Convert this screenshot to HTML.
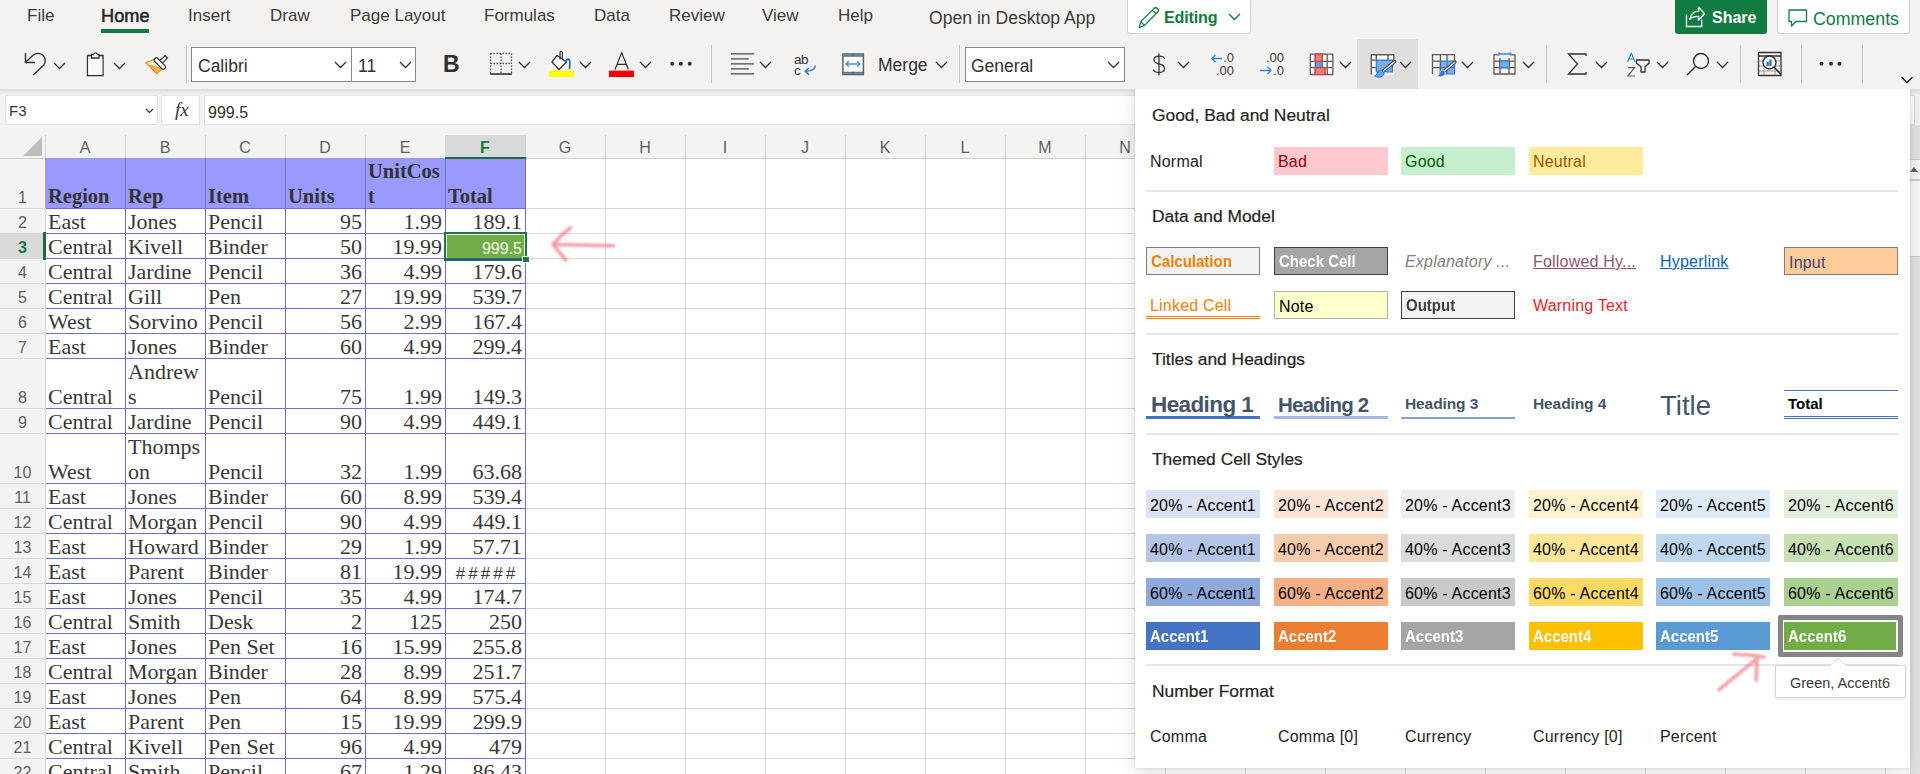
<!DOCTYPE html>
<html><head><meta charset="utf-8"><style>
*{margin:0;padding:0}
html,body{width:1920px;height:774px;overflow:hidden;background:#fff;font-family:"Liberation Sans",sans-serif;position:relative}
.tab{position:absolute;top:6px;font-size:17px;color:#3b3a39;white-space:nowrap}
.tab.sel{color:#252423;font-size:18.2px;-webkit-text-stroke:0.5px #252423;top:5.5px}
.box{position:absolute;background:#fff;border:1px solid #8a8886;box-sizing:border-box}
.rt{position:absolute;font-size:17.5px;color:#323130;white-space:nowrap}
.fb{position:absolute;background:#fff;border:1px solid #e1e1e1;box-sizing:border-box}
.ch{position:absolute;top:138.5px;width:80px;text-align:center;font-size:16px;color:#616161;line-height:18px}
.rh{position:absolute;left:0;width:45px;text-align:center;font-size:16px;color:#616161;line-height:25px}
.c{position:absolute;font-family:"Liberation Serif",serif;font-size:22px;color:#383838;line-height:25px;white-space:nowrap}
.c.b{font-weight:bold;font-size:20.5px;color:#333}
.ph{position:absolute;left:1152px;font-size:17.4px;color:#252423;white-space:nowrap;-webkit-text-stroke:0.2px #252423}
.sw{position:absolute;font-size:16px;letter-spacing:0.2px;color:#201f1e;white-space:nowrap;overflow:hidden;line-height:28px}
.sw span{position:absolute;left:4px;top:2px}
</style></head><body>
<div style="position:absolute;left:0;top:0;width:1920px;height:89px;background:#f3f2f1"></div>
<div class="tab" style="left:27px">File</div>
<div class="tab sel" style="left:101px">Home</div>
<div class="tab" style="left:188px">Insert</div>
<div class="tab" style="left:270px">Draw</div>
<div class="tab" style="left:350px">Page Layout</div>
<div class="tab" style="left:484px">Formulas</div>
<div class="tab" style="left:594px">Data</div>
<div class="tab" style="left:669px">Review</div>
<div class="tab" style="left:762px">View</div>
<div class="tab" style="left:838px">Help</div>
<div style="position:absolute;left:101px;top:29px;width:48px;height:4px;background:#107c41"></div>
<div class="tab" style="left:929px;top:7.5px;font-size:17.6px">Open in Desktop App</div>
<div style="position:absolute;left:1127px;top:-1px;width:124px;height:35px;background:#fff;border:1px solid #d2d0ce;border-radius:0 0 3px 3px;box-sizing:border-box"></div>
<svg style="position:absolute;left:1137px;top:6px" width="24" height="24" viewBox="0 0 24 24"><path d="M2.2 21.6 L3.8 15.6 L16.8 2.6 Q18.8 0.9 20.6 2.6 Q22.3 4.4 20.5 6.3 L7.5 19.4 Z M3.8 15.6 L7.5 19.4 M15.3 4.1 L19 7.8" fill="none" stroke="#107c41" stroke-width="1.3" stroke-linejoin="round"/></svg>
<div style="position:absolute;left:1164px;top:7.5px;font-size:16.2px;font-weight:bold;color:#107c41;letter-spacing:-0.2px">Editing</div>
<svg style="position:absolute;left:1228px;top:13px" width="13" height="8" viewBox="0 0 13 8"><path d="M1 1 L6.5 6.5 L12 1" fill="none" stroke="#107c41" stroke-width="1.4"/></svg>
<div style="position:absolute;left:1675px;top:0;width:92px;height:34px;background:#107c41;border-radius:0 0 3px 3px"></div>
<svg style="position:absolute;left:1684px;top:4px" width="24" height="26" viewBox="0 0 24 26"><path d="M2.5 10.5 V22.5 H17.7 V15.6" fill="none" stroke="#fff" stroke-width="1.3"/><path d="M5.8 15.2 Q7.5 7.5 14.5 7.2 V3.3 L20.6 9.8 L14.5 16.3 V12.3 Q8.5 12.2 5.8 15.2 Z" fill="none" stroke="#fff" stroke-width="1.3" stroke-linejoin="round"/></svg>
<div style="position:absolute;left:1712px;top:8.5px;font-size:16px;font-weight:bold;color:#fff">Share</div>
<div style="position:absolute;left:1777px;top:-1px;width:133px;height:35px;background:#fff;border:1px solid #d2d0ce;border-radius:0 0 3px 3px;box-sizing:border-box"></div>
<svg style="position:absolute;left:1788px;top:8.5px" width="20" height="19" viewBox="0 0 20 19"><path d="M1 1 H18.5 V12.5 H8 L3.5 17 V12.5 H1 Z" fill="none" stroke="#107c41" stroke-width="1.3" stroke-linejoin="round"/></svg>
<div style="position:absolute;left:1813px;top:8.5px;font-size:17.8px;color:#107c41">Comments</div>
<svg style="position:absolute;left:24px;top:52px" width="24" height="25" viewBox="0 0 24 25"><path d="M1.5 1 V10.5 H11" fill="none" stroke="#323130" stroke-width="1.4"/><path d="M1.9 10.1 L9 3.3 A7.3 7.3 0 0 1 19.6 13.3 L9.3 23" fill="none" stroke="#323130" stroke-width="1.4"/></svg>
<svg style="position:absolute;left:53px;top:62px" width="13" height="8" viewBox="0 0 13 8"><path d="M1 1 L6.5 6.5 L12 1" fill="none" stroke="#323130" stroke-width="1.3"/></svg>
<svg style="position:absolute;left:85px;top:52px" width="22" height="25" viewBox="0 0 22 25"><path d="M2.5 3.5 H6 M14 3.5 H18 V23.5 H2.5 V3.5" fill="none" stroke="#323130" stroke-width="1.4"/><path d="M6.5 6 V2.5 H8.5 Q9.5 0.8 10.5 0.8 Q11.5 0.8 12.5 2.5 H14 V6 Z" fill="#fff" stroke="#323130" stroke-width="1.3"/><rect x="3.2" y="7" width="14.2" height="15.8" fill="#faf9f8"/></svg>
<svg style="position:absolute;left:113px;top:62px" width="13" height="8" viewBox="0 0 13 8"><path d="M1 1 L6.5 6.5 L12 1" fill="none" stroke="#323130" stroke-width="1.3"/></svg>
<svg style="position:absolute;left:140px;top:48px" width="32" height="32" viewBox="0 0 32 32"><path d="M5.8 14.5 L15.3 11 L24 19.8 L16.5 25.6 Z" fill="#fde8c8" stroke="#e8891e" stroke-width="1.1" stroke-linejoin="round"/><path d="M10.3 17.4 L22.3 20.7 L16.5 25.6 Z" fill="#f7b955" stroke="#e8891e" stroke-width="0.9" stroke-linejoin="round"/><rect x="0" y="-1.7" width="10" height="3.4" transform="translate(19.2 15.8) rotate(-45)" fill="#fff" stroke="#323130" stroke-width="1.2"/><rect x="-7" y="-2.1" width="14" height="4.2" rx="1.6" transform="translate(19.8 15.6) rotate(45)" fill="#fff" stroke="#323130" stroke-width="1.2"/></svg>
<div style="position:absolute;left:186px;top:45px;width:1px;height:38px;background:#c8c6c4"></div>
<div class="box" style="left:191px;top:47px;width:161px;height:35px"></div>
<div class="box" style="left:351px;top:47px;width:65px;height:35px"></div>
<div class="rt" style="left:198px;top:55.5px">Calibri</div>
<svg style="position:absolute;left:334px;top:61px" width="13" height="8" viewBox="0 0 13 8"><path d="M1 1 L6.5 6.5 L12 1" fill="none" stroke="#323130" stroke-width="1.3"/></svg>
<div class="rt" style="left:358px;top:55.5px">11</div>
<svg style="position:absolute;left:399px;top:61px" width="13" height="8" viewBox="0 0 13 8"><path d="M1 1 L6.5 6.5 L12 1" fill="none" stroke="#323130" stroke-width="1.3"/></svg>
<div style="position:absolute;left:443px;top:51px;font-size:23px;font-weight:bold;color:#323130">B</div>
<svg style="position:absolute;left:489px;top:52px" width="24" height="24" viewBox="0 0 24 24"><path d="M1.5 1.5 H22.5 M1.5 11.5 H22.5 M1.5 1.5 V21 M12 1.5 V21 M22.5 1.5 V21" fill="none" stroke="#3b3a39" stroke-width="1.3" stroke-dasharray="1.3 1.7"/><path d="M1 22 H23" stroke="#323130" stroke-width="1.6"/></svg>
<svg style="position:absolute;left:518px;top:61px" width="13" height="8" viewBox="0 0 13 8"><path d="M1 1 L6.5 6.5 L12 1" fill="none" stroke="#323130" stroke-width="1.3"/></svg>
<svg style="position:absolute;left:548px;top:50px" width="28" height="28" viewBox="0 0 28 28"><path d="M9 5.5 L4 12 L11 19.5 L18.5 12 Z" fill="#fff" stroke="#323130" stroke-width="1.3" stroke-linejoin="round"/><path d="M12 9.5 V2.5 Q12 1.5 13.3 1.5 Q14 1.5 14.3 2.5 V9" fill="none" stroke="#323130" stroke-width="1.2"/><path d="M17 12 Q19 8.5 21 9.5 Q22.5 11 21.5 19" fill="none" stroke="#1f6fc5" stroke-width="1.8"/><rect x="0.75" y="20.6" width="25.25" height="6.4" fill="#ffff00"/></svg>
<svg style="position:absolute;left:579px;top:61px" width="13" height="8" viewBox="0 0 13 8"><path d="M1 1 L6.5 6.5 L12 1" fill="none" stroke="#323130" stroke-width="1.3"/></svg>
<svg style="position:absolute;left:607px;top:50px" width="28" height="28" viewBox="0 0 28 28"><path d="M8 19.5 L14.7 2.9 L21.4 19.5 M10.3 14.3 H19.1" fill="none" stroke="#323130" stroke-width="1.2"/><rect x="2" y="20.6" width="25" height="6.4" fill="#f00000"/></svg>
<svg style="position:absolute;left:639px;top:61px" width="13" height="8" viewBox="0 0 13 8"><path d="M1 1 L6.5 6.5 L12 1" fill="none" stroke="#323130" stroke-width="1.3"/></svg>
<svg style="position:absolute;left:668px;top:61px" width="26" height="6" viewBox="0 0 26 6"><circle cx="4.2" cy="2.8" r="2" fill="#323130"/><circle cx="12.8" cy="2.8" r="2" fill="#323130"/><circle cx="21.7" cy="2.8" r="2" fill="#323130"/></svg>
<div style="position:absolute;left:711px;top:45px;width:1px;height:38px;background:#c8c6c4"></div>
<svg style="position:absolute;left:730px;top:52px" width="26" height="24" viewBox="0 0 26 24"><path d="M1 1.9 H24 M1 6.9 H18.8 M1 11.9 H24 M1 16.9 H18.8 M1 21.9 H24" fill="none" stroke="#4a4a4a" stroke-width="1.4"/></svg>
<svg style="position:absolute;left:759px;top:61px" width="13" height="8" viewBox="0 0 13 8"><path d="M1 1 L6.5 6.5 L12 1" fill="none" stroke="#323130" stroke-width="1.3"/></svg>
<div style="position:absolute;left:794px;top:54px;font-size:13.5px;color:#323130;line-height:11px;width:30px;letter-spacing:-0.5px">ab<br>c</div>
<svg style="position:absolute;left:802px;top:62px" width="16" height="14" viewBox="0 0 16 14"><path d="M13.5 3.5 Q13 9 3.5 9.3 M7 6 L3.3 9.3 L7 12.8" fill="none" stroke="#1f6fc5" stroke-width="1.3"/></svg>
<svg style="position:absolute;left:840px;top:52px" width="26" height="24" viewBox="0 0 26 24"><rect x="2.5" y="4" width="21" height="15.5" fill="#fff"/><rect x="2.9" y="2" width="20.5" height="20.5" fill="none" stroke="#5f5f5f" stroke-width="1.5"/><path d="M2.5 3.3 H23.5 M2.5 21.2 H23.5" stroke="#4a90d6" stroke-width="1.6"/><path d="M13 1.5 V3.5 M13 19.5 V22" stroke="#5f5f5f" stroke-width="1.2"/><path d="M6 12 H20 M8.8 9.2 L6 12 L8.8 14.8 M17.2 9.2 L20 12 L17.2 14.8" fill="none" stroke="#4a90d6" stroke-width="1.4"/><path d="M2.5 4.2 H23.5" stroke="#5f5f5f" stroke-width="1"/><path d="M2.5 20.3 H23.5" stroke="#5f5f5f" stroke-width="1"/></svg>
<div class="rt" style="left:878px;top:55px">Merge</div>
<svg style="position:absolute;left:935px;top:61px" width="13" height="8" viewBox="0 0 13 8"><path d="M1 1 L6.5 6.5 L12 1" fill="none" stroke="#323130" stroke-width="1.3"/></svg>
<div style="position:absolute;left:959px;top:45px;width:1px;height:38px;background:#c8c6c4"></div>
<div class="box" style="left:965px;top:47px;width:160px;height:35px"></div>
<div class="rt" style="left:971px;top:55.5px">General</div>
<svg style="position:absolute;left:1107px;top:61px" width="13" height="8" viewBox="0 0 13 8"><path d="M1 1 L6.5 6.5 L12 1" fill="none" stroke="#323130" stroke-width="1.3"/></svg>
<svg style="position:absolute;left:1150px;top:52px" width="18" height="25" viewBox="0 0 18 25"><path d="M9 1.5 V23.5" stroke="#3b3a39" stroke-width="1.3"/><path d="M14.5 7 Q14 4.2 9 4.2 Q4 4.2 4 7.8 Q4 11 9 12 Q14.5 13 14.5 16.5 Q14.5 20.5 9 20.5 Q4 20.5 3.5 17.5" fill="none" stroke="#3b3a39" stroke-width="1.3"/></svg>
<svg style="position:absolute;left:1177px;top:61px" width="13" height="8" viewBox="0 0 13 8"><path d="M1 1 L6.5 6.5 L12 1" fill="none" stroke="#323130" stroke-width="1.3"/></svg>
<div style="position:absolute;left:1208px;top:52px;font-size:13px;color:#3b3a39;line-height:12.5px;text-align:right;width:26px">.0<br>.00</div>
<svg style="position:absolute;left:1210px;top:54px" width="14" height="10" viewBox="0 0 14 10"><path d="M12 4.5 H2 M5.5 1 L2 4.5 L5.5 8" fill="none" stroke="#2b88d8" stroke-width="1.3"/></svg>
<div style="position:absolute;left:1258px;top:52px;font-size:13px;color:#3b3a39;line-height:12.5px;text-align:right;width:26px">.00<br>.0</div>
<svg style="position:absolute;left:1259px;top:66px" width="14" height="10" viewBox="0 0 14 10"><path d="M1 4.5 H12 M8.5 1 L12 4.5 L8.5 8" fill="none" stroke="#2b88d8" stroke-width="1.3"/></svg>
<svg style="position:absolute;left:1309px;top:53px" width="26" height="24" viewBox="0 0 26 24"><rect x="1.3" y="1.2" width="22.5" height="20.3" fill="#fff"/><rect x="6.3" y="1.2" width="6.9" height="7.2" fill="#f47c7c" stroke="#d9393e" stroke-width="1"/><rect x="6.8" y="8.6" width="5.9" height="5.8" fill="#5aa0e6"/><rect x="6.3" y="14.6" width="9.7" height="6.9" fill="#f47c7c" stroke="#d9393e" stroke-width="1"/><path d="M1.3 1.2 H23.8 V21.5 H1.3 Z M1.3 8.4 H23.8 M1.3 14.6 H23.8 M6.3 1.2 V21.5 M13.2 1.2 V21.5 M18.2 1.2 V21.5" fill="none" stroke="#605e5c" stroke-width="1.3"/><rect x="6.3" y="1.2" width="6.9" height="7.2" fill="#f47c7c" stroke="#d9393e" stroke-width="1.1"/><rect x="6.3" y="14.6" width="9.7" height="6.9" fill="#f47c7c" stroke="#d9393e" stroke-width="1.1"/></svg>
<svg style="position:absolute;left:1339px;top:61px" width="13" height="8" viewBox="0 0 13 8"><path d="M1 1 L6.5 6.5 L12 1" fill="none" stroke="#323130" stroke-width="1.3"/></svg>
<div style="position:absolute;left:1357px;top:39px;width:61px;height:50px;background:#e1dfdd"></div>
<svg style="position:absolute;left:1370px;top:53px" width="27" height="26" viewBox="0 0 27 26"><rect x="1.3" y="1.8" width="22.4" height="19.7" fill="#fff"/><path d="M6.3 7.1 H22.5 V19 H6.3 Z" fill="#74b0ef" stroke="#2b78c8" stroke-width="1.2"/><path d="M1.3 21.5 V1.8 H23.7 V8.4 M1.3 7.1 H6.3 M1.3 14.6 H6.3 M6.3 1.8 V7.1 M18 1.8 V7.1" fill="none" stroke="#605e5c" stroke-width="1.4"/><path d="M24.5 8.8 L12 19" stroke="#3b3a39" stroke-width="3.4" stroke-linecap="round"/><path d="M24.5 8.8 L12 19" stroke="#fff" stroke-width="1.4" stroke-linecap="round"/><path d="M11.5 17 Q8 16.5 7.2 20 Q6.6 22.6 4.5 23.2 Q12 26 14.3 20.5 Z" fill="#5ca8ef" stroke="#2b78c8" stroke-width="1"/></svg>
<svg style="position:absolute;left:1399px;top:61px" width="13" height="8" viewBox="0 0 13 8"><path d="M1 1 L6.5 6.5 L12 1" fill="none" stroke="#323130" stroke-width="1.3"/></svg>
<svg style="position:absolute;left:1431px;top:53px" width="26" height="26" viewBox="0 0 26 26"><path d="M9.4 8.2 H23.5 V21 H9.4 Z" fill="#74b0ef" stroke="#2b78c8" stroke-width="1.2"/><path d="M1.5 21 V1.7 H23.5 V8.2 M1.5 8.2 H9.4 M1.5 14.7 H9.4 M9.4 1.7 V21 M16 1.7 V8.2" fill="none" stroke="#605e5c" stroke-width="1.3"/><path d="M9.4 14.7 H23.5 M16 8.2 V21" stroke="#2b78c8" stroke-width="1"/><path d="M24 9 L13.5 18" stroke="#3b3a39" stroke-width="3.2" stroke-linecap="round"/><path d="M24 9 L13.5 18" stroke="#fff" stroke-width="1.3"/><path d="M13 17 Q9.5 16.5 8.5 20 Q8 22.5 5.5 23 Q12.5 25.5 14.5 20 Z" fill="#2b7cd3" stroke="#fff" stroke-width="0.6"/></svg>
<svg style="position:absolute;left:1461px;top:61px" width="13" height="8" viewBox="0 0 13 8"><path d="M1 1 L6.5 6.5 L12 1" fill="none" stroke="#323130" stroke-width="1.3"/></svg>
<svg style="position:absolute;left:1492px;top:51px" width="26" height="26" viewBox="0 0 26 26"><rect x="8" y="10.2" width="9" height="6.5" fill="#74b0ef" stroke="#2b78c8" stroke-width="1"/><path d="M6.5 3.8 H2 V23 H23 V3.8 H18.5 M2 10.2 H23 M2 16.7 H23 M8 7 V23 M17 7 V23" fill="none" stroke="#605e5c" stroke-width="1.3"/><path d="M7 3 H18.3 M7 1.3 V4.5 M18.3 1.3 V4.5" stroke="#2b88d8" stroke-width="1.3"/><rect x="8" y="10.2" width="9" height="6.5" fill="#74b0ef" stroke="#2b78c8" stroke-width="1"/></svg>
<svg style="position:absolute;left:1522px;top:61px" width="13" height="8" viewBox="0 0 13 8"><path d="M1 1 L6.5 6.5 L12 1" fill="none" stroke="#323130" stroke-width="1.3"/></svg>
<div style="position:absolute;left:1546px;top:45px;width:1px;height:38px;background:#c8c6c4"></div>
<svg style="position:absolute;left:1567px;top:53px" width="22" height="22" viewBox="0 0 22 22"><path d="M19 3 V1 H1.5 L10.5 11 L1.5 21 H19 V19" fill="none" stroke="#323130" stroke-width="1.3"/></svg>
<svg style="position:absolute;left:1595px;top:61px" width="13" height="8" viewBox="0 0 13 8"><path d="M1 1 L6.5 6.5 L12 1" fill="none" stroke="#323130" stroke-width="1.3"/></svg>
<svg style="position:absolute;left:1625px;top:50px" width="28" height="28" viewBox="0 0 28 28"><path d="M2.5 12 L6.3 3.2 L10.1 12 M3.8 9 H8.8" fill="none" stroke="#2b88d8" stroke-width="1.2"/><path d="M2.8 17.6 H9.6 L2.8 26 H10" fill="none" stroke="#5f5f5f" stroke-width="1.2"/><path d="M11.5 10 H24 V13.3 L20 16.8 V22 H16 V16.8 L11.5 13.3 Z" fill="none" stroke="#323130" stroke-width="1.3" stroke-linejoin="round"/></svg>
<svg style="position:absolute;left:1656px;top:61px" width="13" height="8" viewBox="0 0 13 8"><path d="M1 1 L6.5 6.5 L12 1" fill="none" stroke="#323130" stroke-width="1.3"/></svg>
<svg style="position:absolute;left:1686px;top:52px" width="24" height="24" viewBox="0 0 24 24"><circle cx="15" cy="9" r="7.5" fill="none" stroke="#323130" stroke-width="1.4"/><path d="M9.5 14.5 L1 23" stroke="#323130" stroke-width="1.4"/></svg>
<svg style="position:absolute;left:1716px;top:61px" width="13" height="8" viewBox="0 0 13 8"><path d="M1 1 L6.5 6.5 L12 1" fill="none" stroke="#323130" stroke-width="1.3"/></svg>
<div style="position:absolute;left:1740px;top:45px;width:1px;height:38px;background:#c8c6c4"></div>
<svg style="position:absolute;left:1757px;top:51px" width="27" height="27" viewBox="0 0 27 27"><path d="M1.5 1.5 H24 V24.5 H1.5 Z M1.5 5 H24" fill="none" stroke="#323130" stroke-width="1.3"/><path d="M1.5 10 H24 M1.5 15 H24 M1.5 20 H24 M7 5 V24 M18 5 V24" stroke="#8a8886" stroke-width="0.8"/><circle cx="12.5" cy="11.5" r="6.5" fill="#fff" stroke="#323130" stroke-width="1.4"/><path d="M17 16 L24 23.5" stroke="#323130" stroke-width="1.6"/><rect x="9.5" y="11" width="2.3" height="4" fill="#1f6fc5"/><rect x="12.3" y="8.5" width="2.3" height="6.5" fill="#1f6fc5"/></svg>
<div style="position:absolute;left:1801px;top:45px;width:1px;height:38px;background:#c8c6c4"></div>
<svg style="position:absolute;left:1819px;top:61px" width="26" height="6" viewBox="0 0 26 6"><circle cx="2.5" cy="2.8" r="2" fill="#323130"/><circle cx="12" cy="2.8" r="2" fill="#323130"/><circle cx="20.5" cy="2.8" r="2" fill="#323130"/></svg>
<div style="position:absolute;left:1862px;top:45px;width:1px;height:38px;background:#c8c6c4"></div>
<svg style="position:absolute;left:1900px;top:76px" width="14" height="8" viewBox="0 0 13 8"><path d="M1 1 L6.5 6.5 L12 1" fill="none" stroke="#201f1e" stroke-width="1.3"/></svg>
<div style="position:absolute;left:0;top:89px;width:1920px;height:45px;background:#f3f3f3"></div>
<div style="position:absolute;left:0;top:89px;width:1920px;height:6px;background:linear-gradient(#dcdcdc,#f3f3f3)"></div>
<div class="fb" style="left:5px;top:95px;width:153px;height:30px"></div>
<div style="position:absolute;left:9px;top:102px;font-size:15px;color:#323130">F3</div>
<svg style="position:absolute;left:145px;top:107.5px" width="9" height="6" viewBox="0 0 9 6"><path d="M1 1 L4.5 4.5 L8 1" fill="none" stroke="#323130" stroke-width="1.2"/></svg>
<div class="fb" style="left:161px;top:95px;width:39px;height:30px"></div>
<div style="position:absolute;left:175px;top:99px;font-family:'Liberation Serif',serif;font-style:italic;font-size:19px;color:#323130">fx</div>
<div class="fb" style="left:204px;top:95px;width:1711px;height:30px"></div>
<div style="position:absolute;left:208px;top:103.5px;font-size:16px;color:#323130">999.5</div>
<div style="position:absolute;left:0;top:134px;width:1920px;height:24px;background:#f3f3f3"></div>
<div style="position:absolute;left:0;top:158px;width:45px;height:620px;background:#f3f3f3"></div>
<svg style="position:absolute;left:23px;top:137px" width="20" height="20" viewBox="0 0 20 20"><path d="M19 0 V19 H0 Z" fill="#bdbdbd"/></svg>
<div style="position:absolute;left:445px;top:135px;width:81px;height:23px;background:#d9d9d9"></div>
<div style="position:absolute;left:45px;top:135px;width:1px;height:23px;background:#d4d4d4"></div>
<div style="position:absolute;left:45px;top:158px;width:1px;height:620px;background:#d9d9d9"></div>
<div style="position:absolute;left:125px;top:135px;width:1px;height:23px;background:#d4d4d4"></div>
<div style="position:absolute;left:125px;top:158px;width:1px;height:620px;background:#d9d9d9"></div>
<div style="position:absolute;left:205px;top:135px;width:1px;height:23px;background:#d4d4d4"></div>
<div style="position:absolute;left:205px;top:158px;width:1px;height:620px;background:#d9d9d9"></div>
<div style="position:absolute;left:285px;top:135px;width:1px;height:23px;background:#d4d4d4"></div>
<div style="position:absolute;left:285px;top:158px;width:1px;height:620px;background:#d9d9d9"></div>
<div style="position:absolute;left:365px;top:135px;width:1px;height:23px;background:#d4d4d4"></div>
<div style="position:absolute;left:365px;top:158px;width:1px;height:620px;background:#d9d9d9"></div>
<div style="position:absolute;left:445px;top:135px;width:1px;height:23px;background:#d4d4d4"></div>
<div style="position:absolute;left:445px;top:158px;width:1px;height:620px;background:#d9d9d9"></div>
<div style="position:absolute;left:525px;top:135px;width:1px;height:23px;background:#d4d4d4"></div>
<div style="position:absolute;left:525px;top:158px;width:1px;height:620px;background:#d9d9d9"></div>
<div style="position:absolute;left:605px;top:135px;width:1px;height:23px;background:#d4d4d4"></div>
<div style="position:absolute;left:605px;top:158px;width:1px;height:620px;background:#d9d9d9"></div>
<div style="position:absolute;left:685px;top:135px;width:1px;height:23px;background:#d4d4d4"></div>
<div style="position:absolute;left:685px;top:158px;width:1px;height:620px;background:#d9d9d9"></div>
<div style="position:absolute;left:765px;top:135px;width:1px;height:23px;background:#d4d4d4"></div>
<div style="position:absolute;left:765px;top:158px;width:1px;height:620px;background:#d9d9d9"></div>
<div style="position:absolute;left:845px;top:135px;width:1px;height:23px;background:#d4d4d4"></div>
<div style="position:absolute;left:845px;top:158px;width:1px;height:620px;background:#d9d9d9"></div>
<div style="position:absolute;left:925px;top:135px;width:1px;height:23px;background:#d4d4d4"></div>
<div style="position:absolute;left:925px;top:158px;width:1px;height:620px;background:#d9d9d9"></div>
<div style="position:absolute;left:1005px;top:135px;width:1px;height:23px;background:#d4d4d4"></div>
<div style="position:absolute;left:1005px;top:158px;width:1px;height:620px;background:#d9d9d9"></div>
<div style="position:absolute;left:1085px;top:135px;width:1px;height:23px;background:#d4d4d4"></div>
<div style="position:absolute;left:1085px;top:158px;width:1px;height:620px;background:#d9d9d9"></div>
<div style="position:absolute;left:1165px;top:135px;width:1px;height:23px;background:#d4d4d4"></div>
<div style="position:absolute;left:1165px;top:158px;width:1px;height:620px;background:#d9d9d9"></div>
<div style="position:absolute;left:1245px;top:135px;width:1px;height:23px;background:#d4d4d4"></div>
<div style="position:absolute;left:1245px;top:158px;width:1px;height:620px;background:#d9d9d9"></div>
<div style="position:absolute;left:1325px;top:135px;width:1px;height:23px;background:#d4d4d4"></div>
<div style="position:absolute;left:1325px;top:158px;width:1px;height:620px;background:#d9d9d9"></div>
<div style="position:absolute;left:1405px;top:135px;width:1px;height:23px;background:#d4d4d4"></div>
<div style="position:absolute;left:1405px;top:158px;width:1px;height:620px;background:#d9d9d9"></div>
<div style="position:absolute;left:1485px;top:135px;width:1px;height:23px;background:#d4d4d4"></div>
<div style="position:absolute;left:1485px;top:158px;width:1px;height:620px;background:#d9d9d9"></div>
<div style="position:absolute;left:1565px;top:135px;width:1px;height:23px;background:#d4d4d4"></div>
<div style="position:absolute;left:1565px;top:158px;width:1px;height:620px;background:#d9d9d9"></div>
<div style="position:absolute;left:1645px;top:135px;width:1px;height:23px;background:#d4d4d4"></div>
<div style="position:absolute;left:1645px;top:158px;width:1px;height:620px;background:#d9d9d9"></div>
<div style="position:absolute;left:1725px;top:135px;width:1px;height:23px;background:#d4d4d4"></div>
<div style="position:absolute;left:1725px;top:158px;width:1px;height:620px;background:#d9d9d9"></div>
<div style="position:absolute;left:1805px;top:135px;width:1px;height:23px;background:#d4d4d4"></div>
<div style="position:absolute;left:1805px;top:158px;width:1px;height:620px;background:#d9d9d9"></div>
<div style="position:absolute;left:1885px;top:135px;width:1px;height:23px;background:#d4d4d4"></div>
<div style="position:absolute;left:1885px;top:158px;width:1px;height:620px;background:#d9d9d9"></div>
<div style="position:absolute;left:1965px;top:135px;width:1px;height:23px;background:#d4d4d4"></div>
<div style="position:absolute;left:1965px;top:158px;width:1px;height:620px;background:#d9d9d9"></div>
<div style="position:absolute;left:0;top:208px;width:1920px;height:1px;background:#d9d9d9"></div>
<div style="position:absolute;left:0;top:233px;width:1920px;height:1px;background:#d9d9d9"></div>
<div style="position:absolute;left:0;top:258px;width:1920px;height:1px;background:#d9d9d9"></div>
<div style="position:absolute;left:0;top:283px;width:1920px;height:1px;background:#d9d9d9"></div>
<div style="position:absolute;left:0;top:308px;width:1920px;height:1px;background:#d9d9d9"></div>
<div style="position:absolute;left:0;top:333px;width:1920px;height:1px;background:#d9d9d9"></div>
<div style="position:absolute;left:0;top:358px;width:1920px;height:1px;background:#d9d9d9"></div>
<div style="position:absolute;left:0;top:408px;width:1920px;height:1px;background:#d9d9d9"></div>
<div style="position:absolute;left:0;top:433px;width:1920px;height:1px;background:#d9d9d9"></div>
<div style="position:absolute;left:0;top:483px;width:1920px;height:1px;background:#d9d9d9"></div>
<div style="position:absolute;left:0;top:508px;width:1920px;height:1px;background:#d9d9d9"></div>
<div style="position:absolute;left:0;top:533px;width:1920px;height:1px;background:#d9d9d9"></div>
<div style="position:absolute;left:0;top:558px;width:1920px;height:1px;background:#d9d9d9"></div>
<div style="position:absolute;left:0;top:583px;width:1920px;height:1px;background:#d9d9d9"></div>
<div style="position:absolute;left:0;top:608px;width:1920px;height:1px;background:#d9d9d9"></div>
<div style="position:absolute;left:0;top:633px;width:1920px;height:1px;background:#d9d9d9"></div>
<div style="position:absolute;left:0;top:658px;width:1920px;height:1px;background:#d9d9d9"></div>
<div style="position:absolute;left:0;top:683px;width:1920px;height:1px;background:#d9d9d9"></div>
<div style="position:absolute;left:0;top:708px;width:1920px;height:1px;background:#d9d9d9"></div>
<div style="position:absolute;left:0;top:733px;width:1920px;height:1px;background:#d9d9d9"></div>
<div style="position:absolute;left:0;top:758px;width:1920px;height:1px;background:#d9d9d9"></div>
<div style="position:absolute;left:0;top:783px;width:1920px;height:1px;background:#d9d9d9"></div>
<div style="position:absolute;left:0;top:158px;width:1920px;height:1px;background:#cfcfcf"></div>
<div class="ch" style="left:45px">A</div>
<div class="ch" style="left:125px">B</div>
<div class="ch" style="left:205px">C</div>
<div class="ch" style="left:285px">D</div>
<div class="ch" style="left:365px">E</div>
<div class="ch" style="left:445px;color:#107c41;font-weight:bold">F</div>
<div class="ch" style="left:525px">G</div>
<div class="ch" style="left:605px">H</div>
<div class="ch" style="left:685px">I</div>
<div class="ch" style="left:765px">J</div>
<div class="ch" style="left:845px">K</div>
<div class="ch" style="left:925px">L</div>
<div class="ch" style="left:1005px">M</div>
<div class="ch" style="left:1085px">N</div>
<div class="ch" style="left:1165px">O</div>
<div class="ch" style="left:1245px">P</div>
<div class="ch" style="left:1325px">Q</div>
<div class="ch" style="left:1405px">R</div>
<div class="ch" style="left:1485px">S</div>
<div class="ch" style="left:1565px">T</div>
<div class="ch" style="left:1645px">U</div>
<div class="ch" style="left:1725px">V</div>
<div class="ch" style="left:1805px">W</div>
<div class="ch" style="left:1885px">X</div>
<div style="position:absolute;left:0;top:233px;width:45px;height:25px;background:#d9d9d9"></div>
<div class="rh" style="top:185px;">1</div>
<div class="rh" style="top:210px;">2</div>
<div class="rh" style="top:235px;color:#107c41;font-weight:bold;">3</div>
<div class="rh" style="top:260px;">4</div>
<div class="rh" style="top:285px;">5</div>
<div class="rh" style="top:310px;">6</div>
<div class="rh" style="top:335px;">7</div>
<div class="rh" style="top:385px;">8</div>
<div class="rh" style="top:410px;">9</div>
<div class="rh" style="top:460px;">10</div>
<div class="rh" style="top:485px;">11</div>
<div class="rh" style="top:510px;">12</div>
<div class="rh" style="top:535px;">13</div>
<div class="rh" style="top:560px;">14</div>
<div class="rh" style="top:585px;">15</div>
<div class="rh" style="top:610px;">16</div>
<div class="rh" style="top:635px;">17</div>
<div class="rh" style="top:660px;">18</div>
<div class="rh" style="top:685px;">19</div>
<div class="rh" style="top:710px;">20</div>
<div class="rh" style="top:735px;">21</div>
<div class="rh" style="top:760px;">22</div>
<div style="position:absolute;left:45px;top:158px;width:481px;height:50px;background:#9999ff"></div>
<div style="position:absolute;left:125px;top:158px;width:1px;height:620px;background:#6f6fd9"></div>
<div style="position:absolute;left:205px;top:158px;width:1px;height:620px;background:#6f6fd9"></div>
<div style="position:absolute;left:285px;top:158px;width:1px;height:620px;background:#6f6fd9"></div>
<div style="position:absolute;left:365px;top:158px;width:1px;height:620px;background:#6f6fd9"></div>
<div style="position:absolute;left:445px;top:158px;width:1px;height:620px;background:#6f6fd9"></div>
<div style="position:absolute;left:525px;top:158px;width:1px;height:620px;background:#6f6fd9"></div>
<div style="position:absolute;left:46px;top:208px;width:480px;height:1px;background:#6f6fd9"></div>
<div style="position:absolute;left:46px;top:233px;width:480px;height:1px;background:#6f6fd9"></div>
<div style="position:absolute;left:46px;top:258px;width:480px;height:1px;background:#6f6fd9"></div>
<div style="position:absolute;left:46px;top:283px;width:480px;height:1px;background:#6f6fd9"></div>
<div style="position:absolute;left:46px;top:308px;width:480px;height:1px;background:#6f6fd9"></div>
<div style="position:absolute;left:46px;top:333px;width:480px;height:1px;background:#6f6fd9"></div>
<div style="position:absolute;left:46px;top:358px;width:480px;height:1px;background:#6f6fd9"></div>
<div style="position:absolute;left:46px;top:408px;width:480px;height:1px;background:#6f6fd9"></div>
<div style="position:absolute;left:46px;top:433px;width:480px;height:1px;background:#6f6fd9"></div>
<div style="position:absolute;left:46px;top:483px;width:480px;height:1px;background:#6f6fd9"></div>
<div style="position:absolute;left:46px;top:508px;width:480px;height:1px;background:#6f6fd9"></div>
<div style="position:absolute;left:46px;top:533px;width:480px;height:1px;background:#6f6fd9"></div>
<div style="position:absolute;left:46px;top:558px;width:480px;height:1px;background:#6f6fd9"></div>
<div style="position:absolute;left:46px;top:583px;width:480px;height:1px;background:#6f6fd9"></div>
<div style="position:absolute;left:46px;top:608px;width:480px;height:1px;background:#6f6fd9"></div>
<div style="position:absolute;left:46px;top:633px;width:480px;height:1px;background:#6f6fd9"></div>
<div style="position:absolute;left:46px;top:658px;width:480px;height:1px;background:#6f6fd9"></div>
<div style="position:absolute;left:46px;top:683px;width:480px;height:1px;background:#6f6fd9"></div>
<div style="position:absolute;left:46px;top:708px;width:480px;height:1px;background:#6f6fd9"></div>
<div style="position:absolute;left:46px;top:733px;width:480px;height:1px;background:#6f6fd9"></div>
<div style="position:absolute;left:46px;top:758px;width:480px;height:1px;background:#6f6fd9"></div>
<div style="position:absolute;left:46px;top:783px;width:480px;height:1px;background:#6f6fd9"></div>
<div class="c b" style="left:48px;top:184px">Region</div>
<div class="c b" style="left:128px;top:184px">Rep</div>
<div class="c b" style="left:208px;top:184px">Item</div>
<div class="c b" style="left:288px;top:184px">Units</div>
<div class="c b" style="left:368px;top:184px">t</div>
<div class="c b" style="left:368px;top:159px">UnitCos</div>
<div class="c b" style="left:448px;top:184px">Total</div>
<div class="c" style="left:48px;top:209px">East</div>
<div class="c" style="left:128px;top:209px">Jones</div>
<div class="c" style="left:208px;top:209px">Pencil</div>
<div class="c" style="left:285px;top:209px;width:77px;text-align:right">95</div>
<div class="c" style="left:365px;top:209px;width:77px;text-align:right">1.99</div>
<div class="c" style="left:445px;top:209px;width:77px;text-align:right">189.1</div>
<div class="c" style="left:48px;top:234px">Central</div>
<div class="c" style="left:128px;top:234px">Kivell</div>
<div class="c" style="left:208px;top:234px">Binder</div>
<div class="c" style="left:285px;top:234px;width:77px;text-align:right">50</div>
<div class="c" style="left:365px;top:234px;width:77px;text-align:right">19.99</div>
<div class="c" style="left:48px;top:259px">Central</div>
<div class="c" style="left:128px;top:259px">Jardine</div>
<div class="c" style="left:208px;top:259px">Pencil</div>
<div class="c" style="left:285px;top:259px;width:77px;text-align:right">36</div>
<div class="c" style="left:365px;top:259px;width:77px;text-align:right">4.99</div>
<div class="c" style="left:445px;top:259px;width:77px;text-align:right">179.6</div>
<div class="c" style="left:48px;top:284px">Central</div>
<div class="c" style="left:128px;top:284px">Gill</div>
<div class="c" style="left:208px;top:284px">Pen</div>
<div class="c" style="left:285px;top:284px;width:77px;text-align:right">27</div>
<div class="c" style="left:365px;top:284px;width:77px;text-align:right">19.99</div>
<div class="c" style="left:445px;top:284px;width:77px;text-align:right">539.7</div>
<div class="c" style="left:48px;top:309px">West</div>
<div class="c" style="left:128px;top:309px">Sorvino</div>
<div class="c" style="left:208px;top:309px">Pencil</div>
<div class="c" style="left:285px;top:309px;width:77px;text-align:right">56</div>
<div class="c" style="left:365px;top:309px;width:77px;text-align:right">2.99</div>
<div class="c" style="left:445px;top:309px;width:77px;text-align:right">167.4</div>
<div class="c" style="left:48px;top:334px">East</div>
<div class="c" style="left:128px;top:334px">Jones</div>
<div class="c" style="left:208px;top:334px">Binder</div>
<div class="c" style="left:285px;top:334px;width:77px;text-align:right">60</div>
<div class="c" style="left:365px;top:334px;width:77px;text-align:right">4.99</div>
<div class="c" style="left:445px;top:334px;width:77px;text-align:right">299.4</div>
<div class="c" style="left:48px;top:384px">Central</div>
<div class="c" style="left:128px;top:384px">s</div>
<div class="c" style="left:128px;top:359px">Andrew</div>
<div class="c" style="left:208px;top:384px">Pencil</div>
<div class="c" style="left:285px;top:384px;width:77px;text-align:right">75</div>
<div class="c" style="left:365px;top:384px;width:77px;text-align:right">1.99</div>
<div class="c" style="left:445px;top:384px;width:77px;text-align:right">149.3</div>
<div class="c" style="left:48px;top:409px">Central</div>
<div class="c" style="left:128px;top:409px">Jardine</div>
<div class="c" style="left:208px;top:409px">Pencil</div>
<div class="c" style="left:285px;top:409px;width:77px;text-align:right">90</div>
<div class="c" style="left:365px;top:409px;width:77px;text-align:right">4.99</div>
<div class="c" style="left:445px;top:409px;width:77px;text-align:right">449.1</div>
<div class="c" style="left:48px;top:459px">West</div>
<div class="c" style="left:128px;top:459px">on</div>
<div class="c" style="left:128px;top:434px">Thomps</div>
<div class="c" style="left:208px;top:459px">Pencil</div>
<div class="c" style="left:285px;top:459px;width:77px;text-align:right">32</div>
<div class="c" style="left:365px;top:459px;width:77px;text-align:right">1.99</div>
<div class="c" style="left:445px;top:459px;width:77px;text-align:right">63.68</div>
<div class="c" style="left:48px;top:484px">East</div>
<div class="c" style="left:128px;top:484px">Jones</div>
<div class="c" style="left:208px;top:484px">Binder</div>
<div class="c" style="left:285px;top:484px;width:77px;text-align:right">60</div>
<div class="c" style="left:365px;top:484px;width:77px;text-align:right">8.99</div>
<div class="c" style="left:445px;top:484px;width:77px;text-align:right">539.4</div>
<div class="c" style="left:48px;top:509px">Central</div>
<div class="c" style="left:128px;top:509px">Morgan</div>
<div class="c" style="left:208px;top:509px">Pencil</div>
<div class="c" style="left:285px;top:509px;width:77px;text-align:right">90</div>
<div class="c" style="left:365px;top:509px;width:77px;text-align:right">4.99</div>
<div class="c" style="left:445px;top:509px;width:77px;text-align:right">449.1</div>
<div class="c" style="left:48px;top:534px">East</div>
<div class="c" style="left:128px;top:534px">Howard</div>
<div class="c" style="left:208px;top:534px">Binder</div>
<div class="c" style="left:285px;top:534px;width:77px;text-align:right">29</div>
<div class="c" style="left:365px;top:534px;width:77px;text-align:right">1.99</div>
<div class="c" style="left:445px;top:534px;width:77px;text-align:right">57.71</div>
<div class="c" style="left:48px;top:559px">East</div>
<div class="c" style="left:128px;top:559px">Parent</div>
<div class="c" style="left:208px;top:559px">Binder</div>
<div class="c" style="left:285px;top:559px;width:77px;text-align:right">81</div>
<div class="c" style="left:365px;top:559px;width:77px;text-align:right">19.99</div>
<div class="c" style="left:448px;top:560.5px;width:78px;text-align:center;font-family:'Liberation Sans',sans-serif;font-size:17px;letter-spacing:3px">#####</div>
<div class="c" style="left:48px;top:584px">East</div>
<div class="c" style="left:128px;top:584px">Jones</div>
<div class="c" style="left:208px;top:584px">Pencil</div>
<div class="c" style="left:285px;top:584px;width:77px;text-align:right">35</div>
<div class="c" style="left:365px;top:584px;width:77px;text-align:right">4.99</div>
<div class="c" style="left:445px;top:584px;width:77px;text-align:right">174.7</div>
<div class="c" style="left:48px;top:609px">Central</div>
<div class="c" style="left:128px;top:609px">Smith</div>
<div class="c" style="left:208px;top:609px">Desk</div>
<div class="c" style="left:285px;top:609px;width:77px;text-align:right">2</div>
<div class="c" style="left:365px;top:609px;width:77px;text-align:right">125</div>
<div class="c" style="left:445px;top:609px;width:77px;text-align:right">250</div>
<div class="c" style="left:48px;top:634px">East</div>
<div class="c" style="left:128px;top:634px">Jones</div>
<div class="c" style="left:208px;top:634px">Pen Set</div>
<div class="c" style="left:285px;top:634px;width:77px;text-align:right">16</div>
<div class="c" style="left:365px;top:634px;width:77px;text-align:right">15.99</div>
<div class="c" style="left:445px;top:634px;width:77px;text-align:right">255.8</div>
<div class="c" style="left:48px;top:659px">Central</div>
<div class="c" style="left:128px;top:659px">Morgan</div>
<div class="c" style="left:208px;top:659px">Binder</div>
<div class="c" style="left:285px;top:659px;width:77px;text-align:right">28</div>
<div class="c" style="left:365px;top:659px;width:77px;text-align:right">8.99</div>
<div class="c" style="left:445px;top:659px;width:77px;text-align:right">251.7</div>
<div class="c" style="left:48px;top:684px">East</div>
<div class="c" style="left:128px;top:684px">Jones</div>
<div class="c" style="left:208px;top:684px">Pen</div>
<div class="c" style="left:285px;top:684px;width:77px;text-align:right">64</div>
<div class="c" style="left:365px;top:684px;width:77px;text-align:right">8.99</div>
<div class="c" style="left:445px;top:684px;width:77px;text-align:right">575.4</div>
<div class="c" style="left:48px;top:709px">East</div>
<div class="c" style="left:128px;top:709px">Parent</div>
<div class="c" style="left:208px;top:709px">Pen</div>
<div class="c" style="left:285px;top:709px;width:77px;text-align:right">15</div>
<div class="c" style="left:365px;top:709px;width:77px;text-align:right">19.99</div>
<div class="c" style="left:445px;top:709px;width:77px;text-align:right">299.9</div>
<div class="c" style="left:48px;top:734px">Central</div>
<div class="c" style="left:128px;top:734px">Kivell</div>
<div class="c" style="left:208px;top:734px">Pen Set</div>
<div class="c" style="left:285px;top:734px;width:77px;text-align:right">96</div>
<div class="c" style="left:365px;top:734px;width:77px;text-align:right">4.99</div>
<div class="c" style="left:445px;top:734px;width:77px;text-align:right">479</div>
<div class="c" style="left:48px;top:759px">Central</div>
<div class="c" style="left:128px;top:759px">Smith</div>
<div class="c" style="left:208px;top:759px">Pencil</div>
<div class="c" style="left:285px;top:759px;width:77px;text-align:right">67</div>
<div class="c" style="left:365px;top:759px;width:77px;text-align:right">1.29</div>
<div class="c" style="left:445px;top:759px;width:77px;text-align:right">86.43</div>
<div style="position:absolute;left:444px;top:232px;width:83px;height:29px;background:#217346"></div>
<div style="position:absolute;left:446px;top:234px;width:79px;height:25px;background:#eaf5e4"></div>
<div style="position:absolute;left:447px;top:235px;width:77px;height:23px;background:#70ad47"></div>
<div style="position:absolute;left:444px;top:258px;width:79px;height:3px;background:#2c6072"></div>
<div style="position:absolute;left:445px;top:240px;width:77px;text-align:right;color:#f4fbef;font-family:'Liberation Sans',sans-serif;font-size:16px;line-height:18px">999.5</div>
<div style="position:absolute;left:522px;top:256px;width:8px;height:7px;background:#fff"></div>
<div style="position:absolute;left:523px;top:257px;width:6px;height:5px;background:#1e7b45"></div>
<div style="position:absolute;left:43px;top:232px;width:3px;height:28px;background:#1d6b40"></div>
<div style="position:absolute;left:445px;top:157px;width:81px;height:2px;background:#1e6b44"></div>
<svg style="position:absolute;left:545px;top:220px;filter:blur(0.9px)" width="80" height="50" viewBox="0 0 80 50"><path d="M8 24.5 L68.6 25.8 M8 24.5 Q16 15 25.4 7.8 M8 24.5 Q14 32 20.8 40" fill="none" stroke="#f0868e" stroke-width="3.6" stroke-linecap="round" opacity="0.8"/></svg>
<div style="position:absolute;left:1910px;top:125px;width:10px;height:649px;background:#e3e3e3"></div>
<div style="position:absolute;left:1910px;top:159px;width:10px;height:20px;background:#f7f7f7;border-top:1px solid #d0d0d0;box-sizing:border-box"></div>
<svg style="position:absolute;left:1910px;top:164px" width="10" height="10" viewBox="0 0 10 10"><path d="M0 8 L4 3 L8 8 Z" fill="#605e5c"/></svg>
<div style="position:absolute;left:1910px;top:179px;width:10px;height:2px;background:#c8c8c8"></div>
<div style="position:absolute;left:1910px;top:181px;width:10px;height:76px;background:#fafafa;border-bottom:1px solid #d0d0d0;box-sizing:border-box"></div>
<div style="position:absolute;left:1090px;top:89px;width:830px;height:685px;overflow:hidden"><div style="position:absolute;left:45px;top:0;width:775px;height:679px;background:#fff;box-shadow:0 3px 18px rgba(0,0,0,0.14),0 0 3px rgba(0,0,0,0.12)"></div></div>
<div class="ph" style="top:105px">Good, Bad and Neutral</div>
<div class="sw" style="left:1146px;top:147px;width:114px;height:28px"><span style="top:1px">Normal</span></div>
<div class="sw" style="left:1274px;top:147px;width:114px;height:28px;background:#ffc7ce;"><span style="color:#9c0006;top:1px;">Bad</span></div>
<div class="sw" style="left:1401px;top:147px;width:114px;height:28px;background:#c6efce;"><span style="color:#006100;top:1px;">Good</span></div>
<div class="sw" style="left:1529px;top:147px;width:114px;height:28px;background:#ffeb9c;"><span style="color:#9c5700;top:1px;">Neutral</span></div>
<div style="position:absolute;left:1146px;top:190px;width:752px;height:2px;background:#e6e6e6"></div>
<div class="ph" style="top:206px">Data and Model</div>
<div class="sw" style="left:1146px;top:247px;width:114px;height:28px;background:#f2f2f2;border:1px solid #7f7f7f;box-sizing:border-box;"><span style="color:#fa7d00;font-weight:bold;font-size:15px;letter-spacing:0;transform:scaleY(1.12);transform-origin:0 19px;top:0px;">Calculation</span></div>
<div class="sw" style="left:1274px;top:247px;width:114px;height:28px;background:#a5a5a5;border:1px solid #3f3f3f;box-sizing:border-box;"><span style="color:#ffffff;font-weight:bold;font-size:15px;letter-spacing:0;transform:scaleY(1.12);transform-origin:0 19px;top:0px;">Check Cell</span></div>
<div class="sw" style="left:1401px;top:247px;width:114px;height:28px;"><span style="color:#7f7f7f;top:1px;font-style:italic;">Explanatory ...</span></div>
<div class="sw" style="left:1529px;top:247px;width:114px;height:28px;"><span style="color:#954f72;top:1px;text-decoration:underline;">Followed Hy...</span></div>
<div class="sw" style="left:1656px;top:247px;width:114px;height:28px;"><span style="color:#0563c1;top:1px;text-decoration:underline;">Hyperlink</span></div>
<div class="sw" style="left:1784px;top:247px;width:114px;height:28px;background:#ffcc99;border:1px solid #7f7f7f;box-sizing:border-box;"><span style="color:#3f3f76;top:1px;">Input</span></div>
<div class="sw" style="left:1146px;top:291px;width:114px;height:28px;border-bottom:3px double #ff8001;box-sizing:border-box;"><span style="color:#fa7d00;top:1px;">Linked Cell</span></div>
<div class="sw" style="left:1274px;top:291px;width:114px;height:28px;background:#ffffcc;border:1px solid #b2b2b2;box-sizing:border-box;"><span style="color:#000;top:1px;">Note</span></div>
<div class="sw" style="left:1401px;top:291px;width:114px;height:28px;background:#f2f2f2;border:1px solid #3f3f3f;box-sizing:border-box;"><span style="color:#3f3f3f;font-weight:bold;font-size:15px;letter-spacing:0;transform:scaleY(1.12);transform-origin:0 19px;top:0px;">Output</span></div>
<div class="sw" style="left:1529px;top:291px;width:114px;height:28px;"><span style="color:#e3262d;top:1px;">Warning Text</span></div>
<div style="position:absolute;left:1146px;top:333px;width:752px;height:2px;background:#e6e6e6"></div>
<div class="ph" style="top:349px">Titles and Headings</div>
<div style="position:absolute;left:1146px;top:416px;width:114px;height:3px;background:#4472c4"></div>
<div style="position:absolute;left:1151px;top:391.5px;font-size:22.5px;font-weight:bold;color:#44546a;letter-spacing:-0.6px">Heading 1</div>
<div style="position:absolute;left:1274px;top:416px;width:114px;height:3px;background:#a2b8e1"></div>
<div style="position:absolute;left:1278px;top:393px;font-size:20.5px;font-weight:bold;color:#44546a;letter-spacing:-0.85px">Heading 2</div>
<div style="position:absolute;left:1401px;top:417px;width:114px;height:2px;background:#8aa0c8"></div>
<div style="position:absolute;left:1405px;top:395px;font-size:15.5px;font-weight:bold;color:#44546a;letter-spacing:-0.1px">Heading 3</div>
<div style="position:absolute;left:1533px;top:395px;font-size:15.5px;font-weight:bold;color:#44546a;letter-spacing:-0.1px">Heading 4</div>
<div style="position:absolute;left:1660px;top:390px;font-size:27.5px;color:#44546a">Title</div>
<div style="position:absolute;left:1784px;top:390px;width:114px;height:1px;background:#4472c4"></div>
<div style="position:absolute;left:1784px;top:416px;width:114px;height:3px;border-top:1px solid #4472c4;border-bottom:1px solid #4472c4;box-sizing:border-box"></div>
<div style="position:absolute;left:1788px;top:395px;font-size:15px;font-weight:bold;color:#000">Total</div>
<div style="position:absolute;left:1146px;top:433px;width:752px;height:2px;background:#e6e6e6"></div>
<div class="ph" style="top:449px">Themed Cell Styles</div>
<div class="sw" style="left:1146px;top:490px;width:114px;height:28px;background:#d9e1f2;"><span style="color:#000;">20% - Accent1</span></div>
<div class="sw" style="left:1146px;top:534px;width:114px;height:28px;background:#b4c6e7;"><span style="color:#000;">40% - Accent1</span></div>
<div class="sw" style="left:1146px;top:578px;width:114px;height:28px;background:#8ea9db;"><span style="color:#000;">60% - Accent1</span></div>
<div class="sw" style="left:1146px;top:622px;width:114px;height:28px;background:#4472c4;"><span style="color:#fff;font-weight:bold;font-size:15px;letter-spacing:0;transform:scaleY(1.12);transform-origin:0 19px;top:1px;">Accent1</span></div>
<div class="sw" style="left:1274px;top:490px;width:114px;height:28px;background:#fce4d6;"><span style="color:#000;">20% - Accent2</span></div>
<div class="sw" style="left:1274px;top:534px;width:114px;height:28px;background:#f8cbad;"><span style="color:#000;">40% - Accent2</span></div>
<div class="sw" style="left:1274px;top:578px;width:114px;height:28px;background:#f4b084;"><span style="color:#000;">60% - Accent2</span></div>
<div class="sw" style="left:1274px;top:622px;width:114px;height:28px;background:#ed7d31;"><span style="color:#fff;font-weight:bold;font-size:15px;letter-spacing:0;transform:scaleY(1.12);transform-origin:0 19px;top:1px;">Accent2</span></div>
<div class="sw" style="left:1401px;top:490px;width:114px;height:28px;background:#ededed;"><span style="color:#000;">20% - Accent3</span></div>
<div class="sw" style="left:1401px;top:534px;width:114px;height:28px;background:#dbdbdb;"><span style="color:#000;">40% - Accent3</span></div>
<div class="sw" style="left:1401px;top:578px;width:114px;height:28px;background:#c9c9c9;"><span style="color:#000;">60% - Accent3</span></div>
<div class="sw" style="left:1401px;top:622px;width:114px;height:28px;background:#a5a5a5;"><span style="color:#fff;font-weight:bold;font-size:15px;letter-spacing:0;transform:scaleY(1.12);transform-origin:0 19px;top:1px;">Accent3</span></div>
<div class="sw" style="left:1529px;top:490px;width:114px;height:28px;background:#fff2cc;"><span style="color:#000;">20% - Accent4</span></div>
<div class="sw" style="left:1529px;top:534px;width:114px;height:28px;background:#ffe699;"><span style="color:#000;">40% - Accent4</span></div>
<div class="sw" style="left:1529px;top:578px;width:114px;height:28px;background:#ffd966;"><span style="color:#000;">60% - Accent4</span></div>
<div class="sw" style="left:1529px;top:622px;width:114px;height:28px;background:#ffc000;"><span style="color:#fff;font-weight:bold;font-size:15px;letter-spacing:0;transform:scaleY(1.12);transform-origin:0 19px;top:1px;">Accent4</span></div>
<div class="sw" style="left:1656px;top:490px;width:114px;height:28px;background:#ddebf7;"><span style="color:#000;">20% - Accent5</span></div>
<div class="sw" style="left:1656px;top:534px;width:114px;height:28px;background:#bdd7ee;"><span style="color:#000;">40% - Accent5</span></div>
<div class="sw" style="left:1656px;top:578px;width:114px;height:28px;background:#9bc2e6;"><span style="color:#000;">60% - Accent5</span></div>
<div class="sw" style="left:1656px;top:622px;width:114px;height:28px;background:#5b9bd5;"><span style="color:#fff;font-weight:bold;font-size:15px;letter-spacing:0;transform:scaleY(1.12);transform-origin:0 19px;top:1px;">Accent5</span></div>
<div class="sw" style="left:1784px;top:490px;width:114px;height:28px;background:#e2efda;"><span style="color:#000;">20% - Accent6</span></div>
<div class="sw" style="left:1784px;top:534px;width:114px;height:28px;background:#c6e0b4;"><span style="color:#000;">40% - Accent6</span></div>
<div class="sw" style="left:1784px;top:578px;width:114px;height:28px;background:#a9d08e;"><span style="color:#000;">60% - Accent6</span></div>
<div class="sw" style="left:1784px;top:622px;width:114px;height:28px;background:#70ad47;"><span style="color:#fff;font-weight:bold;font-size:15px;letter-spacing:0;transform:scaleY(1.12);transform-origin:0 19px;top:1px;">Accent6</span></div>
<div style="position:absolute;left:1778px;top:615px;width:125px;height:42px;border:5px solid #858585;border-radius:2px;box-sizing:border-box"></div>
<div style="position:absolute;left:1783px;top:620px;width:115px;height:32px;border:2px solid #fff;border-left-width:1px;box-sizing:border-box"></div>
<div style="position:absolute;left:1146px;top:664px;width:752px;height:2px;background:#e6e6e6"></div>
<div class="ph" style="top:681px">Number Format</div>
<div class="sw" style="left:1146px;top:721px;width:114px;height:28px"><span>Comma</span></div>
<div class="sw" style="left:1274px;top:721px;width:114px;height:28px"><span>Comma [0]</span></div>
<div class="sw" style="left:1401px;top:721px;width:114px;height:28px"><span>Currency</span></div>
<div class="sw" style="left:1529px;top:721px;width:114px;height:28px"><span>Currency [0]</span></div>
<div class="sw" style="left:1656px;top:721px;width:114px;height:28px"><span>Percent</span></div>
<div style="position:absolute;left:1775px;top:665px;width:131px;height:33px;background:#fff;border:1px solid #d6d6d6;border-radius:2px;box-sizing:border-box;box-shadow:0 1px 3px rgba(0,0,0,0.12)"></div>
<svg style="position:absolute;left:1829px;top:657px" width="20" height="10" viewBox="0 0 20 10"><path d="M0 9.5 L9 1 L18 9.5" fill="#fff" stroke="#d6d6d6" stroke-width="1"/><rect x="1" y="9" width="17" height="2" fill="#fff"/></svg>
<div style="position:absolute;left:1790px;top:674.5px;font-size:14.5px;color:#3b3a39">Green, Accent6</div>
<svg style="position:absolute;left:1710px;top:645px;filter:blur(0.9px)" width="65" height="55" viewBox="0 0 65 55"><path d="M9 44.6 L47 13.6 M23.7 9.3 Q40 9.5 54 12 M47 13.6 L46.2 35.3" fill="none" stroke="#f0868e" stroke-width="3.6" stroke-linecap="round" opacity="0.8"/></svg>
</body></html>
